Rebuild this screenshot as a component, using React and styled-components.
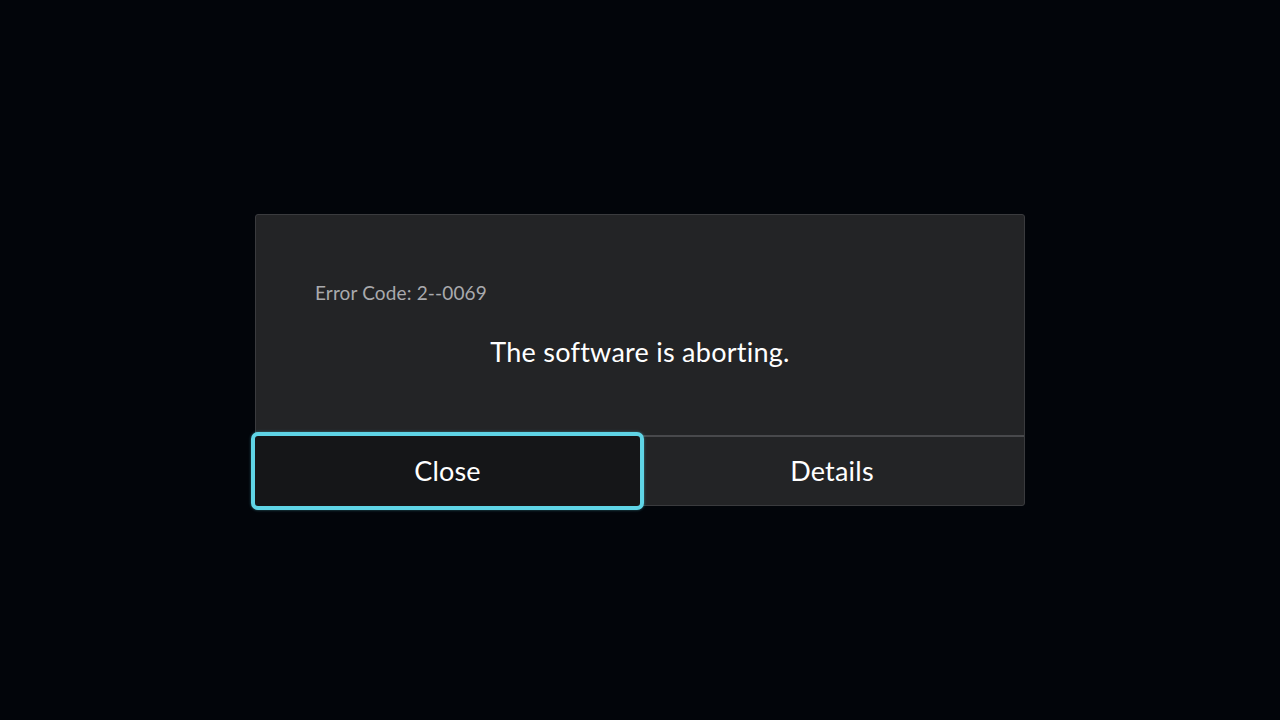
import styled, { createGlobalStyle } from 'styled-components';

const background = '#02050a';
const panel = '#232426';
const accent = '#5fd4e6';

const GlobalStyle = createGlobalStyle`
  html, body {
    margin: 0;
    padding: 0;
    background: ${background};
    font-family: 'Lato', 'Open Sans', sans-serif;
  }
  * { box-sizing: border-box; }
`;

const Screen = styled.div`
  width: 1280px;
  height: 720px;
  display: flex;
  justify-content: center;
  padding-top: 214px;
  background: ${background};
`;

const Dialog = styled.div`
  width: 770px;
  height: 292px;
  background: ${panel};
  border: 1px solid #3a3b3e;
  border-radius: 3px;
  display: flex;
  flex-direction: column;
`;

const Body = styled.div`
  height: 222px;
  flex-shrink: 0;
  padding: 66px 59px 0;
  border-bottom: 2px solid #48494c;
`;

const Code = styled.div`
  font-size: 19px;
  color: #a9aaad;
  letter-spacing: 0.15px;
`;

const Message = styled.div`
  margin-top: 31px;
  font-size: 27px;
  color: #ffffff;
  text-align: center;
  letter-spacing: 0.25px;
`;

const Actions = styled.div`
  flex: 1;
  display: grid;
  grid-template-columns: 1fr 1fr;
`;

const Button = styled.button`
  font-family: inherit;
  font-size: 27px;
  color: #ffffff;
  background: ${p => (p.$focused ? '#151618' : 'transparent')};
  border: ${p => (p.$focused ? `4px solid ${accent}` : 'none')};
  border-radius: ${p => (p.$focused ? '7px' : '0')};
  margin: ${p => (p.$focused ? '-5px -4px -5px -5px' : '0')};
  box-shadow: ${p => (p.$focused ? `0 0 3px rgba(95, 212, 230, 0.45)` : 'none')};
  display: flex;
  align-items: center;
  justify-content: center;
  padding: 0 0 2px;
  cursor: pointer;
  letter-spacing: 0.2px;
`;

export default function App() {
  return (
    <Screen>
      <GlobalStyle />
      <Dialog>
        <Body>
          <Code>Error Code: 2--0069</Code>
          <Message>The software is aborting.</Message>
        </Body>
        <Actions>
          <Button $focused>Close</Button>
          <Button>Details</Button>
        </Actions>
      </Dialog>
    </Screen>
  );
}
